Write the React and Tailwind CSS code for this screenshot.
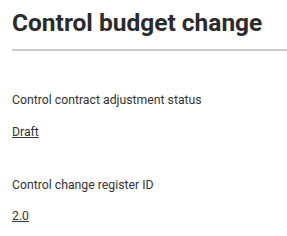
export default function App() {
  return (
    <div className="w-[287px] h-[236px] bg-white overflow-hidden pl-3 text-[#333]" style={{ fontFamily: "Roboto, 'Liberation Sans', sans-serif" }}>
      <h1 className="text-[24.5px] font-bold leading-[30px] pt-[8px] pb-[11px] border-b-2 border-[#cccccc] text-[#2b2b2b] whitespace-nowrap">Control budget change</h1>
      <div className="mt-[41px] text-[12.25px] leading-[16px]">Control contract adjustment status</div>
      <div className="mt-[16px] text-[12.25px] leading-[16px]"><span className="underline">Draft</span></div>
      <div className="mt-[37px] text-[12.25px] leading-[16px]">Control change register ID</div>
      <div className="mt-[15px] text-[12.25px] leading-[16px]"><span className="underline">2.0</span></div>
    </div>
  );
}
